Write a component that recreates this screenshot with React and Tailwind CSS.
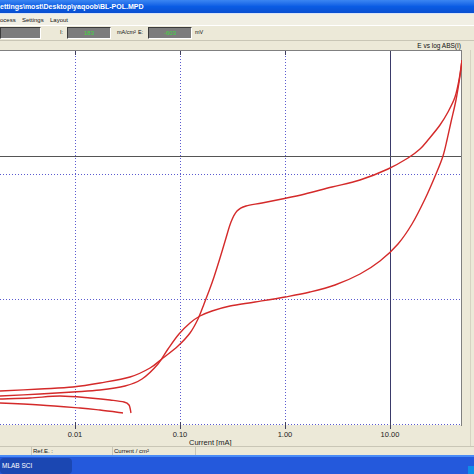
import React from 'react'

const FONT = { fontFamily: '"Liberation Sans", Arial, sans-serif' }

// forward scan
const F = [
  [0, 391], [40, 389], [73, 387], [100, 383], [130, 377], [150, 368], [163, 358], [178, 346],
  [190, 333], [198, 319], [204, 304], [209, 291], [214, 277], [220, 258], [226, 238], [231, 222],
  [237, 211], [246, 206], [262, 203], [282, 199], [305, 194], [332, 187], [360, 180], [388, 169],
  [408, 158], [420, 149], [428, 140], [440, 125], [448, 112], [455, 97], [459, 80], [462, 60],
]

// reverse scan
const R = [
  [462, 60], [460, 76], [456, 100], [451, 122], [447, 140], [443, 156], [436, 174], [425, 199],
  [412, 224], [398, 244], [380, 261], [360, 274], [335, 285], [310, 292], [285, 297], [255, 302],
  [230, 306], [212, 311], [200, 316], [190, 323], [179, 334], [168, 349], [158, 364], [142, 379],
  [125, 386], [100, 390], [73, 392], [40, 394], [0, 396],
]

const C1 = [[0, 399], [30, 398], [60, 396], [90, 398], [110, 400], [124, 402], [129, 405], [131, 413]]
const C2 = [[0, 403], [40, 405], [80, 408], [100, 410], [123, 413]]

// catmull-rom -> bezier, so the scan looks like a measured trace
function smooth(p) {
  let d = `M${p[0][0]},${p[0][1]}`
  for (let i = 0; i < p.length - 1; i++) {
    const p0 = p[i - 1] || p[i]
    const p1 = p[i]
    const p2 = p[i + 1]
    const p3 = p[i + 2] || p2
    const c1x = p1[0] + (p2[0] - p0[0]) / 6
    const c1y = p1[1] + (p2[1] - p0[1]) / 6
    const c2x = p2[0] - (p3[0] - p1[0]) / 6
    const c2y = p2[1] - (p3[1] - p1[1]) / 6
    d += ` C${c1x.toFixed(1)},${c1y.toFixed(1)} ${c2x.toFixed(1)},${c2y.toFixed(1)} ${p2[0]},${p2[1]}`
  }
  return d
}

const DECADES = [
  { x: 75, label: '0.01' },
  { x: 180, label: '0.10' },
  { x: 285, label: '1.00' },
  { x: 390, label: '10.00' },
]

function Chart() {
  return (
    <svg width="462" height="396" viewBox="0 50 462 396" className="block">
      <rect x="0" y="50" width="462" height="375" fill="#ffffff" />
      {/* grid */}
      {[174, 299].map((y) => (
        <line key={y} x1="0" x2="462" y1={y + 0.5} y2={y + 0.5} stroke="#5b5bd0" strokeDasharray="1 2" />
      ))}
      <line x1="0" x2="462" y1="424.5" y2="424.5" stroke="#5b5bd0" strokeDasharray="1 2" />
      {DECADES.slice(0, 3).map((d) => (
        <line key={d.x} x1={d.x + 0.5} x2={d.x + 0.5} y1="50" y2="425" stroke="#5b5bd0" strokeDasharray="1 2" />
      ))}
      {/* cursor */}
      <line x1="390.5" x2="390.5" y1="50" y2="425" stroke="#3a3a6a" />
      <line x1="0" x2="462" y1="156.5" y2="156.5" stroke="#555555" />
      {/* frame */}
      <line x1="0" x2="462" y1="50.5" y2="50.5" stroke="#808080" />
      <line x1="461.5" x2="461.5" y1="50" y2="426" stroke="#808080" />
      {/* ticks */}
      {DECADES.map((d) => (
        <g key={d.x}>
          <line x1={d.x + 0.5} x2={d.x + 0.5} y1="51" y2="55" stroke="#404060" />
          <line x1={d.x + 0.5} x2={d.x + 0.5} y1="422" y2="429" stroke="#404060" />
          <text x={d.x} y="437" fontSize="7.5" fill="#222" textAnchor="middle" style={FONT}>{d.label}</text>
        </g>
      ))}
      <text x="189" y="445" fontSize="7.5" fill="#222" style={FONT}>Current [mA]</text>
      {/* curves */}
      <g fill="none" stroke="#d42a2a" strokeWidth="1.4" strokeLinejoin="round">
        <path d={smooth(F)} />
        <path d={smooth(R)} />
        <path d={smooth(C1)} />
        <path d={smooth(C2)} />
      </g>
    </svg>
  )
}

function Readout({ w, value }) {
  return (
    <div
      className={`h-[12px] ${w} shrink-0 bg-[#7c7c7c] border border-[#3c3c3c] border-b-white border-r-white flex items-center justify-center text-[6px] text-[#3fd83f]`}
    >
      {value}
    </div>
  )
}

export default function App() {
  return (
    <div className="w-[474px] h-[474px] overflow-hidden bg-[#ece9d8] flex flex-col text-[#111]" style={FONT}>
      {/* Title bar */}
      <div className="h-[13px] shrink-0 bg-gradient-to-b from-[#3b86f2] via-[#0a5ce4] to-[#0a4fd0] flex items-center">
        <span className="text-[7px] font-bold text-white leading-none whitespace-nowrap">
          ettings\most\Desktop\yaqoob\BL-POL.MPD
        </span>
      </div>
      {/* Menu */}
      <div className="h-[12px] shrink-0 bg-[#f1efe4] border-t border-[#d8e4f8] flex items-center text-[6px] leading-none">
        <span className="w-[22px]">ocess</span>
        <span className="w-[28px]">Settings</span>
        <span>Layout</span>
      </div>
      {/* Toolbar */}
      <div className="h-[15px] shrink-0 flex items-center text-[5.5px] leading-none border-t border-white">
        <Readout w="w-[41px]" value="" />
        <span className="ml-[19px] w-[7px] shrink-0">I:</span>
        <Readout w="w-[44px]" value="183" />
        <span className="ml-[6px] w-[21px] shrink-0">mA/cm²</span>
        <span className="w-[10px] shrink-0">E:</span>
        <Readout w="w-[44px]" value="-603" />
        <span className="ml-[3px]">mV</span>
      </div>
      {/* Chart header */}
      <div className="h-[10px] shrink-0 border-t border-[#c9c6b6] flex">
        <div className="w-[462px] flex items-end justify-end pr-[1px]">
          <span className="text-[6.5px] leading-none mb-[1px]">E vs log ABS(I)</span>
        </div>
      </div>
      {/* Chart */}
      <div className="h-[396px] shrink-0 flex">
        <Chart />
        <div className="flex-1 flex justify-end pr-[3px]">
          <div className="w-px bg-[#d6d2c2]" />
        </div>
      </div>
      {/* Status bar */}
      <div className="h-[9px] shrink-0 flex text-[6px] leading-none border-t border-[#c9c6b6]">
        <div className="w-[32px] border-r border-[#c9c6b6]" />
        <div className="w-[81px] border-r border-[#c9c6b6] pl-[1px] flex items-center">Ref.E. :</div>
        <div className="w-[83px] border-r border-[#c9c6b6] pl-[1px] flex items-center">Current / cm²</div>
        <div className="flex-1" />
      </div>
      {/* Taskbar */}
      <div className="flex-1 bg-[#2459dc] border-t-2 border-[#4a8cf6] flex items-stretch">
        <div className="w-[72px] mt-[1px] bg-[#1b47b2] rounded-sm flex items-center pl-[2px] text-[6.5px] text-white">
          MLAB SCI
        </div>
        <div className="flex-1" />
        <div className="w-[6px] bg-[#0f8de8] mt-[9px]" />
      </div>
    </div>
  )
}
